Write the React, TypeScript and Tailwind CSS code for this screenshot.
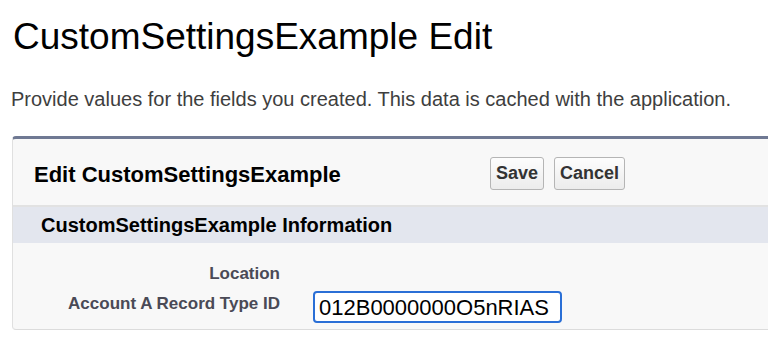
import React from 'react';

export default function App() {
    return (
        <div className="w-[768px] h-[346px] bg-white overflow-hidden font-['Liberation_Sans',Arial,sans-serif]">
            <h1 className="pl-[13px] pt-[16px] text-[37px] leading-[42px] text-black">CustomSettingsExample Edit</h1>
            <p className="pl-[11px] mt-[29px] text-[20px] leading-[24px] text-[#3e3e3e]">
                Provide values for the fields you created. This data is cached with the application.
            </p>
            <div className="ml-[12px] mt-[25px] border-t-[3px] border-[#6f7993] rounded-tl-[4px] rounded-bl-[4px] border-l border-b border-l-[#e0e0e0] border-b-[#dcdcdc] bg-[#f8f8f8]">
                <div className="h-[68px] flex items-center border-b-2 border-[#e2e2e2]">
                    <h2 className="pl-[21px] pt-[4px] w-[477px] text-[22px] font-bold text-black">Edit CustomSettingsExample</h2>
                    <div className="flex gap-[10px] pt-[2px]">
                        <button className="h-[33px] px-[5px] rounded-[3px] border border-[#b5b5b5] bg-gradient-to-b from-[#fdfdfd] to-[#ececec] text-[18px] font-bold text-[#333]">Save</button>
                        <button className="h-[33px] px-[5px] rounded-[3px] border border-[#b5b5b5] bg-gradient-to-b from-[#fdfdfd] to-[#ececec] text-[18px] font-bold text-[#333]">Cancel</button>
                    </div>
                </div>
                <div className="h-[36px] flex items-center bg-[#e3e6ee] pl-[28px] text-[20px] font-bold text-black">
                    CustomSettingsExample Information
                </div>
                <div className="pt-[19px] pb-[6px]">
                    <div className="flex items-center h-[24px]">
                        <div className="w-[267px] text-right text-[17px] font-bold text-[#4a4a56]">Location</div>
                    </div>
                    <div className="flex items-start mt-[5px]">
                        <div className="w-[267px] pt-[3px] text-right text-[17px] leading-[20px] font-bold text-[#4a4a56]">Account A Record Type ID</div>
                        <input
                            readOnly
                            value="012B0000000O5nRIAS"
                            className="ml-[33px] w-[249px] h-[32px] px-[4px] rounded-[4px] border-2 border-[#2a6fd6] bg-white text-[22px] text-black outline-none"
                        />
                    </div>
                </div>
            </div>
        </div>
    );
}
